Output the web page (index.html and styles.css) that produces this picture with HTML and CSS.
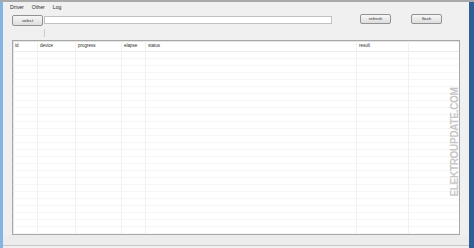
FILE: index.html
```html
<!DOCTYPE html>
<html lang="en">
<head>
    <meta charset="UTF-8">
    <title>Flash Tool</title>
    <link rel="stylesheet" href="styles.css">
</head>
<body>
    <div class="topline"></div>
    <div class="window">
        <div class="menu">
            <span>Driver</span>
            <span>Other</span>
            <span>Log</span>
        </div>

        <div class="toolbar">
            <button class="btn btn-select">select</button>
            <input class="path" type="text">
            <button class="btn btn-refresh">refresh</button>
            <button class="btn btn-flash">flash</button>
        </div>

        <div class="tick"></div>

        <div class="list">
            <div class="col"><div class="head">id</div><div class="rows"></div></div>
            <div class="col"><div class="head">device</div><div class="rows"></div></div>
            <div class="col"><div class="head">progress</div><div class="rows"></div></div>
            <div class="col"><div class="head">elapse</div><div class="rows"></div></div>
            <div class="col"><div class="head">status</div><div class="rows"></div></div>
            <div class="col"><div class="head">result</div><div class="rows"></div></div>
            <div class="col last"><div class="head"></div><div class="rows"></div></div>
        </div>

        <div class="statusbar"></div>

        <span class="watermark">ELEKTROUPDATE.COM</span>
    </div>
</body>
</html>
```

FILE: styles.css
```css
html, body {
    margin: 0;
    padding: 0;
}
body {
    width: 474px;
    height: 248px;
    overflow: hidden;
    background: #f0f0f0;
    font-family: 'Liberation Sans', Arial, sans-serif;
    color: #2a2a2a;
    display: flex;
    flex-direction: column;
}
.topline {
    height: 2px;
    background: #a9a9a9;
}
.window {
    position: relative;
    flex: 1;
    display: flex;
    flex-direction: column;
    border-left: 3px solid #86b4e2;
    border-right: 5px solid #2d5e97;
}
.menu {
    height: 9px;
    display: flex;
    align-items: center;
    gap: 8px;
    padding-left: 7px;
    font-size: 5.2px;
}
.toolbar {
    display: flex;
    align-items: flex-start;
    height: 12px;
    margin-top: 3px;
    padding-left: 9px;
}
.btn {
    box-sizing: border-box;
    width: 31px;
    height: 10px;
    padding: 0;
    border: 1px solid #919292;
    border-radius: 2px;
    background: linear-gradient(#f7f7f7, #dddddd);
    font-family: 'Liberation Sans', Arial, sans-serif;
    font-size: 4.3px;
    color: #2a2a2a;
    line-height: 8px;
}
.btn-select {
    height: 11px;
    margin-top: 1px;
}
.path {
    box-sizing: border-box;
    width: 288px;
    height: 8px;
    margin: 2px 0 0 1px;
    padding: 0;
    border: 1px solid #c2c2c2;
    background: #ffffff;
}
.btn-refresh {
    margin-left: 28px;
}
.btn-flash {
    margin-left: 20px;
}
.tick {
    width: 1px;
    height: 8px;
    margin: 3px 0 0 41px;
    background: #cccccc;
}
.list {
    box-sizing: border-box;
    width: 448px;
    height: 195px;
    margin: 3px 0 0 9px;
    border: 1px solid #a8a8a8;
    box-shadow: inset 1px 1px 0 #e4e4e4;
    background: #ffffff;
    display: grid;
    grid-template-columns: 25px 38px 46px 24px 211px 52px 1fr;
}
.col {
    display: flex;
    flex-direction: column;
    border-right: 1px solid #f1f1f1;
}
.col.last {
    border-right: none;
}
.head {
    height: 10px;
    line-height: 10px;
    padding-left: 2px;
    border-bottom: 1px solid #ebebeb;
    font-size: 4.5px;
    color: #2a2a2a;
}
.rows {
    flex: 1;
    background: repeating-linear-gradient(to bottom, transparent 0, transparent 6px, #f6f6f6 6px, #f6f6f6 7px);
}
.statusbar {
    height: 10px;
    background: #ececec;
    border-bottom: 1px solid #c8c8c8;
}
.watermark {
    position: absolute;
    left: 451px;
    top: 140px;
    transform: translate(-50%, -50%) rotate(-90deg);
    font-size: 10px;
    font-weight: bold;
    letter-spacing: -0.3px;
    color: #c6c6c6;
    white-space: nowrap;
}
```
